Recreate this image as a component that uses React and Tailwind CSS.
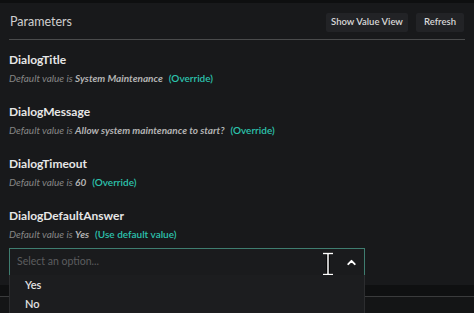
import { ChevronUp } from "lucide-react";

const params = [
  { name: "DialogTitle", value: "System Maintenance", action: "(Override)" },
  { name: "DialogMessage", value: "Allow system maintenance to start?", action: "(Override)" },
  { name: "DialogTimeout", value: "60", action: "(Override)" },
];

function ParamHeader({ name, value, action }) {
  return (
    <div>
      <div className="text-[12px] leading-[18px] font-bold text-[#e6e6e6]">{name}</div>
      <div className="text-[10px] leading-[18px] italic text-[#858585]">
        Default value is <span className="font-bold text-[#b3b3b3]">{value}</span>
        <span className="not-italic text-[#2cc2ad] ml-[6px] font-semibold">{action}</span>
      </div>
    </div>
  );
}

export default function App() {
  return (
    <div
      className="w-[474px] h-[313px] overflow-hidden flex flex-col bg-[#18191b]"
      style={{ fontFamily: "Lato, 'Open Sans', sans-serif" }}
    >
      <div className="h-[3px] bg-[#0e0f10]" />

      {/* panel */}
      <div className="flex-1 px-[9px] relative">
        <div className="flex items-center justify-between h-[37px] pt-[2px] border-b border-[#4a4b4c] pr-[1px]">
          <span className="text-[12.5px] text-[#cfcfcf] pl-[1px]">Parameters</span>
          <div className="flex gap-[8px]">
            <button className="h-[19px] w-[82px] bg-[#222326] text-[9.5px] font-semibold text-[#d8d8d8] rounded-[2px]">
              Show Value View
            </button>
            <button className="h-[19px] w-[48px] bg-[#222326] text-[9.5px] font-semibold text-[#d8d8d8] rounded-[2px]">
              Refresh
            </button>
          </div>
        </div>

        <div className="flex flex-col gap-[16px] pt-[11px]">
          {params.map((p) => (
            <ParamHeader key={p.name} {...p} />
          ))}
          <div>
            <ParamHeader name="DialogDefaultAnswer" value="Yes" action="(Use default value)" />
            <div className="relative mt-[5px] w-[356px]">
              <div className="h-[27px] border border-b-0 border-[#3f7d70] bg-[#1a1b1d] flex items-center pl-[7px] pr-[6px]">
                <span className="flex-1 text-[10.5px] text-[#5c5d5f]">Select an option...</span>
                <ChevronUp size={13} strokeWidth={3.5} className="text-white" />
              </div>
              {/* mouse cursor */}
              <svg
                className="absolute left-[312px] top-[4px]"
                width="14"
                height="24"
                viewBox="0 0 14 24"
              >
                <path
                  d="M2 1.5h10M2 22.5h10M7 1.5v21"
                  stroke="#000"
                  strokeWidth="3.2"
                  fill="none"
                />
                <path
                  d="M2 1.5h10M2 22.5h10M7 1.5v21"
                  stroke="#fff"
                  strokeWidth="1.5"
                  fill="none"
                />
              </svg>
              {/* dropdown */}
              <div className="absolute top-full left-0 right-0 z-10 bg-[#1c1d1f] border-x border-[#2c2d2f] pl-[15px]">
                <div className="h-[19px] leading-[19px] text-[11px] font-semibold text-[#e2e2e2]">Yes</div>
                <div className="h-[19px] leading-[19px] text-[11px] font-semibold text-[#e2e2e2]">No</div>
                <div className="h-[19px]" />
              </div>
            </div>
          </div>
        </div>
      </div>

      {/* footer behind dropdown */}
      <div className="h-[11px] bg-[#0f1011] border-b border-[#3a3b3c] box-content" />
      <div className="h-[16px] bg-[#141516]" />
    </div>
  );
}
